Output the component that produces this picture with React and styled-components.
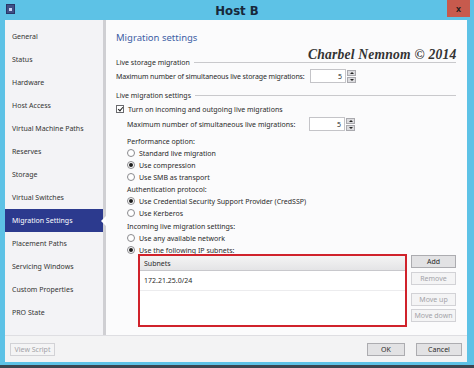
import styled, { createGlobalStyle } from 'styled-components';

const GlobalStyle = createGlobalStyle`
  html, body {
    margin: 0;
    padding: 0;
    width: 474px;
    height: 368px;
    overflow: hidden;
  }
  body {
    font-family: 'Noto Sans', 'Open Sans', sans-serif;
    font-size: 7px;
    color: #2a2a2a;
    white-space: nowrap;
  }
`;

const Window = styled.div`
  width: 474px;
  height: 368px;
  box-sizing: border-box;
  background: #5dc2e6;
  border-bottom: 3px solid #3b4651;
  display: flex;
  flex-direction: column;
`;

const TitleBar = styled.div`
  height: 20px;
  flex: none;
  display: flex;
  align-items: center;
  justify-content: center;
  position: relative;
`;

const Title = styled.div`
  font-family: 'DejaVu Sans Condensed', 'Liberation Sans', Arial, sans-serif;
  font-weight: bold;
  font-size: 13px;
  color: #17283a;
`;

const AppIcon = styled.div`
  position: absolute;
  left: 6px;
  top: 4px;
  width: 9px;
  height: 10px;
  background: #3f4f86;
  border: 1px solid #2a3566;
  box-sizing: border-box;
  &::after {
    content: '';
    position: absolute;
    left: 2px;
    top: 3px;
    width: 3px;
    height: 3px;
    background: #c9d3f2;
  }
`;

const CloseButton = styled.div`
  position: absolute;
  right: 4px;
  top: 0;
  width: 23px;
  height: 17px;
  background: #c75a4d;
  color: #1b1b1b;
  font-family: 'Liberation Sans', Arial, sans-serif;
  font-weight: bold;
  font-size: 9px;
  display: flex;
  align-items: center;
  justify-content: center;
`;

const Body = styled.div`
  flex: 1;
  margin: 0 7px 3px 5px;
  background: #fbfbfc;
  display: flex;
  flex-direction: column;
  min-height: 0;
`;

const Main = styled.div`
  flex: 1;
  display: flex;
  min-height: 0;
`;

const Nav = styled.div`
  width: 98px;
  flex: none;
  background: #f3f3f6;
  border-right: 3px solid #cfcfd3;
  padding-top: 5px;
  display: flex;
  flex-direction: column;
`;

const NavItem = styled.div`
  height: 23px;
  display: flex;
  align-items: center;
  padding-left: 7px;
  position: relative;
  color: ${(p) => (p.$active ? '#ffffff' : '#333333')};
  background: ${(p) => (p.$active ? '#2c3a8e' : 'transparent')};
  &::after {
    content: ${(p) => (p.$active ? "''" : 'none')};
    position: absolute;
    right: -3px;
    top: 7px;
    border-style: solid;
    border-width: 5px 5px 5px 0;
    border-color: transparent #ffffff transparent transparent;
  }
`;

const Content = styled.div`
  flex: 1;
  position: relative;
  padding: 10px 11px 0 10px;
  display: flex;
  flex-direction: column;
`;

const Heading = styled.div`
  height: 14px;
  font-size: 9.5px;
  color: #3d5ea5;
  display: flex;
  align-items: center;
`;

const Watermark = styled.div`
  position: absolute;
  left: 202px;
  top: 27px;
  font-family: 'Liberation Serif', 'Times New Roman', serif;
  font-style: italic;
  font-weight: bold;
  font-size: 13.6px;
  color: #333333;
  letter-spacing: 0.2px;
`;

const Section = styled.div`
  height: 12px;
  margin-top: ${(p) => p.$mt || 0}px;
  display: flex;
  align-items: center;
  gap: 4px;
  &::after {
    content: '';
    flex: 1;
    height: 1px;
    background: #c9c9cc;
  }
`;

const FieldRow = styled.div`
  height: 14px;
  margin-top: ${(p) => p.$mt || 0}px;
  padding-left: ${(p) => p.$indent || 0}px;
  display: flex;
  align-items: center;
`;

const FieldLabel = styled.div`
  width: ${(p) => p.$w}px;
  flex: none;
  letter-spacing: ${(p) => p.$spacing || 0}px;
`;

const NumberBox = styled.div`
  width: 36px;
  height: 14px;
  box-sizing: border-box;
  border: 1px solid #c4c4c8;
  background: #ffffff;
  display: flex;
  align-items: center;
  justify-content: flex-end;
  padding-right: 3px;
`;

const Spinner = styled.div`
  width: 9px;
  height: 13px;
  margin-left: 1px;
  display: flex;
  flex-direction: column;
  gap: 1px;
`;

const SpinHalf = styled.div`
  flex: 1;
  background: #dcdcdf;
  border: 1px solid #a9a9ae;
  display: flex;
  align-items: center;
  justify-content: center;
  &::before {
    content: '';
    border-style: solid;
    border-width: ${(p) => (p.$down ? '2px 2px 0 2px' : '0 2px 2px 2px')};
    border-color: ${(p) =>
      p.$down
        ? '#222 transparent transparent transparent'
        : 'transparent transparent #222 transparent'};
  }
`;

const Line = styled.div`
  height: 12px;
  margin-top: ${(p) => p.$mt || 0}px;
  padding-left: ${(p) => p.$indent || 0}px;
  display: flex;
  align-items: center;
  gap: 4px;
`;

const CheckBox = styled.span`
  width: 8px;
  height: 8px;
  box-sizing: border-box;
  border: 1px solid #6a6a6e;
  background: #fff;
  position: relative;
  flex: none;
  &::after {
    content: '';
    position: absolute;
    left: 2px;
    top: 0;
    width: 2px;
    height: 4px;
    border: solid #222;
    border-width: 0 1.5px 1.5px 0;
    transform: rotate(40deg);
  }
`;

const Radio = styled.span`
  width: 8px;
  height: 8px;
  box-sizing: border-box;
  border-radius: 50%;
  border: 1px solid #8a8a8e;
  background: #fff;
  flex: none;
  display: flex;
  align-items: center;
  justify-content: center;
  &::after {
    content: '';
    display: ${(p) => (p.$on ? 'block' : 'none')};
    width: 4px;
    height: 4px;
    border-radius: 50%;
    background: #1e1e1e;
  }
`;

const SubnetArea = styled.div`
  margin-top: -2px;
  margin-left: 22px;
  display: flex;
  gap: 4px;
`;

const Table = styled.div`
  width: 269px;
  height: 73px;
  box-sizing: border-box;
  border: 2px solid #d0222b;
  background: #ffffff;
  display: flex;
  flex-direction: column;
`;

const TableHead = styled.div`
  height: 14px;
  flex: none;
  background: linear-gradient(#f4f4f4, #e4e4e6);
  border-bottom: 1px solid #c8c8cc;
  display: flex;
  align-items: center;
  padding-left: 4px;
`;

const TableRow = styled.div`
  height: 19px;
  border-bottom: 1px solid #ececee;
  display: flex;
  align-items: center;
  padding-left: 4px;
`;

const ButtonColumn = styled.div`
  display: flex;
  flex-direction: column;
  padding-top: 1px;
`;

const Button = styled.div`
  width: ${(p) => p.$w || 45}px;
  height: 13px;
  box-sizing: border-box;
  margin-top: ${(p) => p.$mt || 0}px;
  border: 1px solid ${(p) => (p.$disabled ? '#d2d2d6' : '#acacb0')};
  background: ${(p) => (p.$disabled ? '#f4f4f5' : '#e2e2e4')};
  color: ${(p) => (p.$disabled ? '#a3a3a8' : '#2a2a2a')};
  display: flex;
  align-items: center;
  justify-content: center;
`;

const Footer = styled.div`
  height: 27px;
  flex: none;
  box-sizing: border-box;
  border-top: 1px solid #dedee2;
  background: #f3f3f4;
  display: flex;
  align-items: center;
  padding: 0 5px 0 5px;
  gap: 11px;
`;

const Spacer = styled.div`
  flex: 1;
`;

const navItems = [
  'General',
  'Status',
  'Hardware',
  'Host Access',
  'Virtual Machine Paths',
  'Reserves',
  'Storage',
  'Virtual Switches',
  'Migration Settings',
  'Placement Paths',
  'Servicing Windows',
  'Custom Properties',
  'PRO State',
];

function NumberField({ label, labelWidth, spacing, value, indent, mt }) {
  return (
    <FieldRow $indent={indent} $mt={mt}>
      <FieldLabel $w={labelWidth} $spacing={spacing}>
        {label}
      </FieldLabel>
      <NumberBox>{value}</NumberBox>
      <Spinner>
        <SpinHalf />
        <SpinHalf $down />
      </Spinner>
    </FieldRow>
  );
}

export default function App() {
  return (
    <Window>
      <GlobalStyle />
      <TitleBar>
        <AppIcon />
        <Title>Host B</Title>
        <CloseButton>x</CloseButton>
      </TitleBar>
      <Body>
        <Main>
          <Nav>
            {navItems.map((item) => (
              <NavItem key={item} $active={item === 'Migration Settings'}>
                {item}
              </NavItem>
            ))}
          </Nav>
          <Content>
            <Heading>Migration settings</Heading>
            <Watermark>Charbel Nemnom © 2014</Watermark>

            <Section $mt={12}>Live storage migration</Section>
            <NumberField
              mt={1}
              labelWidth={194}
              spacing={-0.12}
              label="Maximum number of simultaneous live storage migrations:"
              value="5"
            />

            <Section $mt={6}>Live migration settings</Section>
            <Line $mt={2}>
              <CheckBox />
              Turn on incoming and outgoing live migrations
            </Line>
            <NumberField
              mt={2}
              indent={11}
              labelWidth={182}
              label="Maximum number of simultaneous live migrations:"
              value="5"
            />

            <Line $mt={4} $indent={11}>Performance option:</Line>
            <Line $indent={11}>
              <Radio />
              Standard live migration
            </Line>
            <Line $indent={11}>
              <Radio $on />
              Use compression
            </Line>
            <Line $indent={11}>
              <Radio />
              Use SMB as transport
            </Line>

            <Line $indent={11}>Authentication protocol:</Line>
            <Line $indent={11}>
              <Radio $on />
              Use Credential Security Support Provider (CredSSP)
            </Line>
            <Line $indent={11}>
              <Radio />
              Use Kerberos
            </Line>

            <Line $mt={1} $indent={11}>Incoming live migration settings:</Line>
            <Line $indent={11}>
              <Radio />
              Use any available network
            </Line>
            <Line $indent={11}>
              <Radio $on />
              Use the following IP subnets:
            </Line>

            <SubnetArea>
              <Table>
                <TableHead>Subnets</TableHead>
                <TableRow>172.21.25.0/24</TableRow>
              </Table>
              <ButtonColumn>
                <Button>Add</Button>
                <Button $mt={4} $disabled>Remove</Button>
                <Button $mt={8} $disabled>Move up</Button>
                <Button $mt={3} $disabled>Move down</Button>
              </ButtonColumn>
            </SubnetArea>
          </Content>
        </Main>
        <Footer>
          <Button $w={45} $disabled>View Script</Button>
          <Spacer />
          <Button $w={38}>OK</Button>
          <Button $w={46}>Cancel</Button>
        </Footer>
      </Body>
    </Window>
  );
}
